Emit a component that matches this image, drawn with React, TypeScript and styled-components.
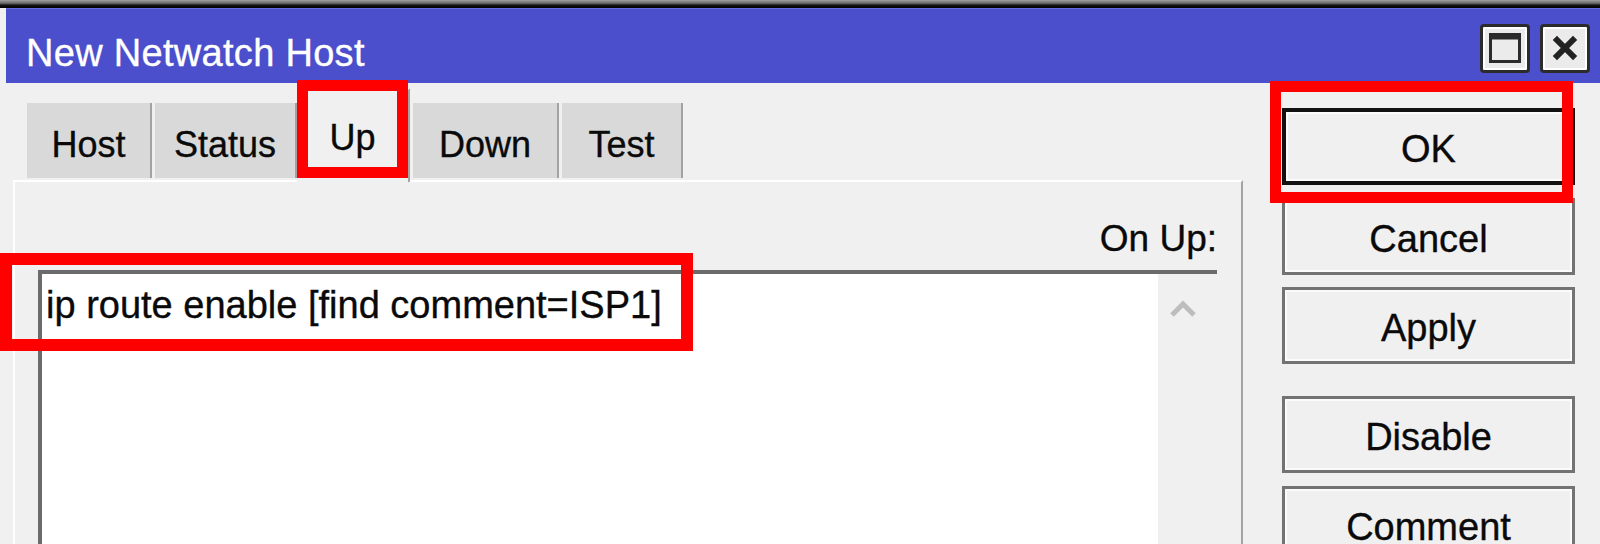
import React from "react";
import styled, { createGlobalStyle } from "styled-components";

const GlobalStyle = createGlobalStyle`
  html, body {
    margin: 0;
    padding: 0;
    background: #f0f0f0;
    overflow: hidden;
  }
  body {
    font-family: "Liberation Sans", Arial, sans-serif;
    -webkit-text-stroke: 0.35px currentColor;
  }
`;

const tabs = [
  { label: "Host", width: 125 },
  { label: "Status", width: 142 },
  { label: "Up", width: 113, active: true },
  { label: "Down", width: 146 },
  { label: "Test", width: 121 },
];

const buttons = [
  { label: "OK", gap: 25, primary: true },
  { label: "Cancel", gap: 13 },
  { label: "Apply", gap: 12 },
  { label: "Disable", gap: 32 },
  { label: "Comment", gap: 13 },
];

// red annotation frames drawn over the screenshot
const marks = [
  { left: 297, top: 80, width: 111, height: 98, thick: 11 },
  { left: 1270, top: 81, width: 303, height: 122, thick: 11 },
  { left: 0, top: 253, width: 693, height: 98, thick: 12 },
];

export default function App() {
  return (
    <Window>
      <GlobalStyle />
      <TopEdge />
      <TitleBar>
        <Title>New Netwatch Host</Title>
        <WinButtons>
          <WinButton>
            <svg width="32" height="30" viewBox="0 0 32 30">
              <rect x="1.5" y="1.5" width="29" height="27" fill="none" stroke="#2b2b2b" strokeWidth="3" />
              <rect x="1.5" y="1.5" width="29" height="5" fill="#2b2b2b" />
            </svg>
          </WinButton>
          <WinButton>
            <svg width="26" height="26" viewBox="0 0 26 26">
              <path d="M5 5 L21 21 M21 5 L5 21" stroke="#222" strokeWidth="6" strokeLinecap="square" />
            </svg>
          </WinButton>
        </WinButtons>
      </TitleBar>
      <Body>
        <LeftColumn>
          <TabRow>
            {tabs.map((t) => (
              <Tab key={t.label} $width={t.width} $active={!!t.active}>
                {t.label}
              </Tab>
            ))}
          </TabRow>
          <Panel>
            <FieldLabel>On Up:</FieldLabel>
            <Editor>
              <Script>ip route enable [find comment=ISP1]</Script>
              <ScrollTrack>
                <svg width="28" height="18" viewBox="0 0 28 18">
                  <polyline points="3,15 14,4 25,15" fill="none" stroke="#bdbdbd" strokeWidth="5" />
                </svg>
              </ScrollTrack>
            </Editor>
          </Panel>
        </LeftColumn>
        <RightColumn>
          {buttons.map((b) => (
            <DialogButton key={b.label} $gap={b.gap} $primary={!!b.primary}>
              {b.label}
            </DialogButton>
          ))}
        </RightColumn>
      </Body>
      {marks.map((m, i) => (
        <Mark
          key={i}
          $thick={m.thick}
          style={{ left: m.left, top: m.top, width: m.width, height: m.height }}
        />
      ))}
    </Window>
  );
}

const Window = styled.div`
  position: relative;
  width: 1600px;
  height: 544px;
  overflow: hidden;
  display: flex;
  flex-direction: column;
  background: #f0f0f0;
`;

const TopEdge = styled.div`
  height: 8px;
  background: linear-gradient(#a0a0a0 0%, #6a6a6a 40%, #111 65%, #000 100%);
`;

const TitleBar = styled.div`
  margin-left: 6px;
  height: 75px;
  box-sizing: border-box;
  background: #4b4fcb;
  border-top: 1px solid #6569dd;
  display: flex;
  align-items: center;
  justify-content: space-between;
  padding: 0 10px 0 20px;
`;

const Title = styled.div`
  color: #fff;
  font-size: 38px;
  line-height: 44px;
  letter-spacing: 0.3px;
  padding-top: 13px;
`;

const WinButtons = styled.div`
  display: flex;
  gap: 10px;
  margin-top: 4px;
`;

const WinButton = styled.div`
  width: 50px;
  height: 49px;
  box-sizing: border-box;
  border: 3px solid #2b2b2b;
  border-radius: 4px;
  background: #ebebeb;
  box-shadow: inset 0 0 0 2px #fff;
  display: flex;
  align-items: center;
  justify-content: center;
`;

const Body = styled.div`
  flex: 1;
  min-height: 0;
  display: flex;
  padding-left: 13px;
`;

const LeftColumn = styled.div`
  width: 1230px;
  display: flex;
  flex-direction: column;
`;

const TabRow = styled.div`
  height: 97px;
  box-sizing: border-box;
  display: flex;
  align-items: flex-end;
  gap: 3px;
  padding-left: 14px;
`;

const Tab = styled.div<{ $width: number; $active: boolean }>`
  position: relative;
  z-index: ${(p) => (p.$active ? 1 : 0)};
  width: ${(p) => p.$width}px;
  height: ${(p) => (p.$active ? 94 : 75)}px;
  margin-bottom: ${(p) => (p.$active ? -2 : 2)}px;
  margin-left: ${(p) => (p.$active ? -3 : 0)}px;
  box-sizing: border-box;
  padding-top: ${(p) => (p.$active ? 28 : 22)}px;
  background: ${(p) => (p.$active ? "#f0f0f0" : "#d9d9d9")};
  border-top: ${(p) => (p.$active ? "2px solid #fff" : "none")};
  border-right: 2px solid #a3a3a3;
  font-size: 36px;
  line-height: 40px;
  text-align: center;
  color: #0a0a0a;
`;

const Panel = styled.div`
  flex: 1;
  display: flex;
  flex-direction: column;
  padding: 35px 24px 0 23px;
  background: #f0f0f0;
  border-top: 2px solid #fff;
  border-left: 2px solid #fff;
  border-right: 2px solid #a3a3a3;
`;

const FieldLabel = styled.div`
  text-align: right;
  font-size: 37px;
  line-height: 44px;
  margin-bottom: 9px;
  color: #0a0a0a;
`;

const Editor = styled.div`
  flex: 1;
  display: flex;
  background: #fff;
  border-top: 4px solid #6b6b6b;
  border-left: 4px solid #6b6b6b;
`;

const Script = styled.div`
  flex: 1;
  padding: 9px 4px;
  font-size: 38px;
  line-height: 44px;
  color: #0a0a0a;
  white-space: pre;
`;

const ScrollTrack = styled.div`
  width: 59px;
  box-sizing: border-box;
  padding: 26px 0 0 11px;
  background: #f0f0f0;
`;

const RightColumn = styled.div`
  width: 293px;
  margin-left: 39px;
  display: flex;
  flex-direction: column;
`;

const DialogButton = styled.div<{ $gap: number; $primary: boolean }>`
  flex: none;
  height: 77px;
  margin-top: ${(p) => p.$gap}px;
  box-sizing: border-box;
  border: ${(p) => (p.$primary ? "4px solid #111" : "3px solid #737373")};
  background: #f0f0f0;
  box-shadow: inset 0 0 0 2px #fbfbfb;
  display: flex;
  align-items: center;
  justify-content: center;
  padding-top: 4px;
  font-size: 38px;
  line-height: 44px;
  color: #0a0a0a;
`;

const Mark = styled.div<{ $thick: number }>`
  position: absolute;
  box-sizing: border-box;
  border: ${(p) => p.$thick}px solid #ff0000;
  pointer-events: none;
  z-index: 5;
`;
